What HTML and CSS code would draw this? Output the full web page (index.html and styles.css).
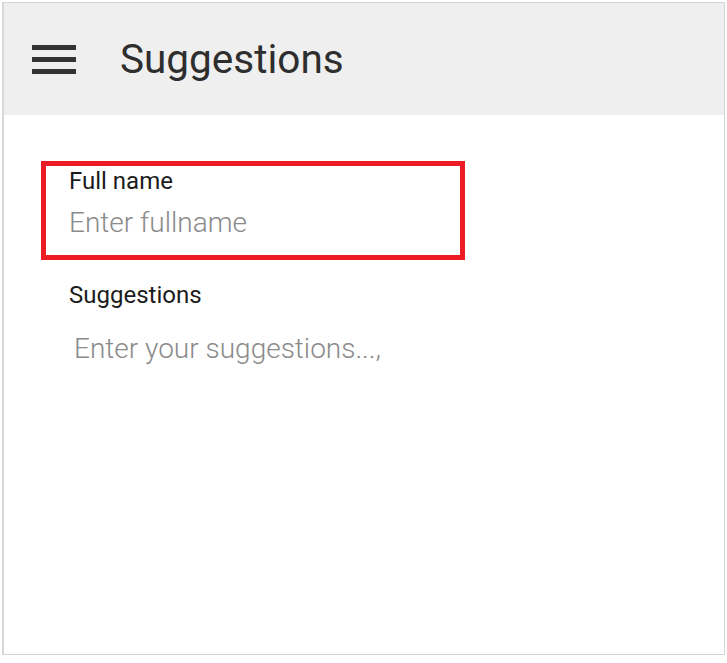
FILE: index.html
```html
<!DOCTYPE html>
<html>
<head>
<meta charset="utf-8">
<link rel="stylesheet" href="styles.css">
</head>
<body>
<div class="frame">
  <header class="appbar">
    <div class="menu" aria-label="menu">
      <span class="bar"></span><span class="bar"></span><span class="bar"></span>
    </div>
    <h1 class="title">Suggestions</h1>
  </header>
  <main class="content">
    <div class="field highlighted">
      <label class="label" for="fullname">Full name</label>
      <input class="input" id="fullname" type="text" placeholder="Enter fullname">
    </div>
    <div class="field">
      <label class="label" for="sugg">Suggestions</label>
      <textarea class="area" id="sugg" placeholder="Enter your suggestions...,"></textarea>
    </div>
  </main>
</div>
</body>
</html>
```
FILE: styles.css
```css
* { box-sizing: border-box; }
html, body { margin: 0; padding: 0; background: #fff; }
body { font-family: Roboto, "Noto Sans", sans-serif; }
.frame {
  margin: 2px 2px 0 2px;
  height: 653px;
  border: 1px solid #d4d4d4;
  border-left: 2px solid #d8d8d8;
  display: flex;
  flex-direction: column;
}
.appbar {
  height: 112px;
  background: #efefef;
  display: flex;
  align-items: center;
  padding-left: 28px;
  gap: 44px;
}
.menu { display: flex; flex-direction: column; gap: 7px; width: 44px; }
.bar { display: block; height: 5px; background: #333; }
.title {
  margin: 0;
  font-weight: 400;
  font-size: 40.5px;
  line-height: normal;
  color: #2e2e2e;
}
.content { padding: 46px 0 0 37px; }
.field { display: flex; flex-direction: column; padding-left: 28px; width: 424px; }
.highlighted {
  border: 5px solid #ed1c24;
  padding: 1px 0 5px 23px;
}
.label { font-size: 24px; color: #1c1c1c; line-height: 28px; }
.input, .area {
  border: none;
  outline: none;
  font-family: Roboto, sans-serif;
  font-weight: 300;
  font-size: 28px;
  color: #333;
  padding: 0;
  background: transparent;
}
.input { height: 55px; }
.area { resize: none; height: 90px; margin-top: 23px; padding-left: 5px; line-height: normal; }
.input::placeholder, .area::placeholder { color: #8a8a8a; }
.field + .field { margin-top: 21px; }
```
